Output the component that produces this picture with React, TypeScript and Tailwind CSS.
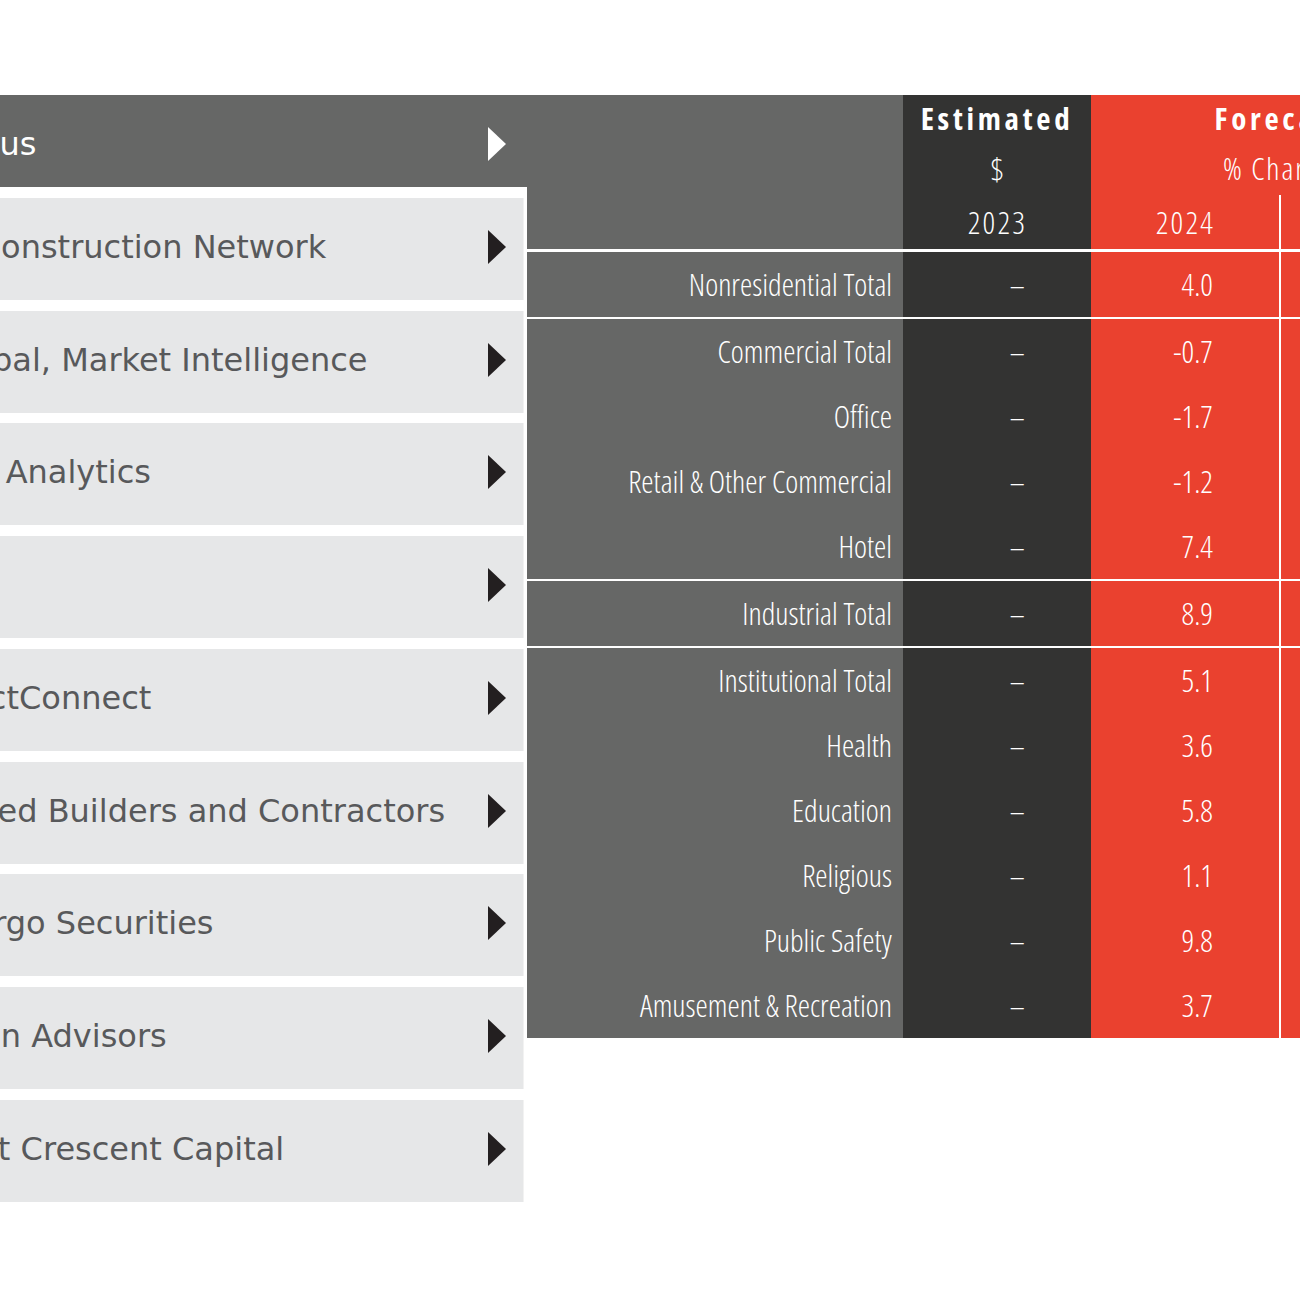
type Row = {
  label: string;
  estimated: string;
  forecast: string;
};

type Group = Row[];

const PANELISTS = [
  "Dodge Construction Network",
  "S&P Global, Market Intelligence",
  "Moody's Analytics",
  "FMI",
  "ConstructConnect",
  "Associated Builders and Contractors",
  "Wells Fargo Securities",
  "Markstein Advisors",
  "Pinecrest Crescent Capital",
];

const GROUPS: Group[] = [
  [{ label: "Nonresidential Total", estimated: "–", forecast: "4.0" }],
  [
    { label: "Commercial Total", estimated: "–", forecast: "-0.7" },
    { label: "Office", estimated: "–", forecast: "-1.7" },
    { label: "Retail & Other Commercial", estimated: "–", forecast: "-1.2" },
    { label: "Hotel", estimated: "–", forecast: "7.4" },
  ],
  [{ label: "Industrial Total", estimated: "–", forecast: "8.9" }],
  [
    { label: "Institutional Total", estimated: "–", forecast: "5.1" },
    { label: "Health", estimated: "–", forecast: "3.6" },
    { label: "Education", estimated: "–", forecast: "5.8" },
    { label: "Religious", estimated: "–", forecast: "1.1" },
    { label: "Public Safety", estimated: "–", forecast: "9.8" },
    { label: "Amusement & Recreation", estimated: "–", forecast: "3.7" },
  ],
];

function Arrow({ light }: { light?: boolean }) {
  return (
    <svg width="18" height="34" viewBox="0 0 18 34" className="shrink-0">
      <polygon points="0,0 18,17 0,34" fill={light ? "#ffffff" : "#231f20"} />
    </svg>
  );
}

function PanelList() {
  return (
    <aside className="ml-[-160px] flex w-[687px] shrink-0 flex-col gap-[10.75px] font-['DejaVu_Sans',sans-serif] text-[32px]">
      <div className="flex h-[92px] w-[687px] items-center justify-between bg-[#666766] pl-[24px] pr-[21px] pt-[6px] text-white">
        <span>Consensus</span>
        <Arrow light />
      </div>

      {PANELISTS.map((name) => (
        <div
          key={name}
          className="flex h-[102px] w-[684px] items-center justify-between whitespace-nowrap border-r border-[#f2f2f2] bg-[#e6e7e8] pb-[4px] pl-[24px] pr-[17px] text-[#58595b]"
        >
          <span>{name}</span>
          <Arrow />
        </div>
      ))}
    </aside>
  );
}

function TableRow({ row }: { row: Row }) {
  return (
    <div className="flex h-[65px]">
      <div className="flex w-[376px] shrink-0 items-center justify-end bg-[#666766] pr-[11px]">
        {row.label}
      </div>
      <div className="flex w-[188px] shrink-0 items-center justify-end bg-[#333332] pr-[66px]">
        {row.estimated}
      </div>
      <div className="flex w-[188px] shrink-0 items-center justify-end bg-[#ea412f] pr-[66px]">
        {row.forecast}
      </div>
      <div className="w-[2px] shrink-0 bg-white" />
      <div className="w-[188px] shrink-0 bg-[#ea412f]" />
    </div>
  );
}

function ForecastTable() {
  return (
    <section className="w-[942px] shrink-0 font-['Open_Sans',sans-serif] text-[31px] font-light text-white font-stretch-condensed">
      <div className="flex h-[154px]">
        <div className="w-[376px] shrink-0 bg-[#666766]" />

        <div className="flex w-[188px] shrink-0 flex-col bg-[#333332]">
          <div className="flex h-[46px] items-center justify-center font-bold tracking-[0.12em]">
            Estimated
          </div>
          <div className="flex h-[54px] items-center justify-center">$</div>
          <div className="flex h-[54px] items-center justify-end pr-[64px] tracking-[0.07em]">
            2023
          </div>
        </div>

        <div className="flex w-[378px] shrink-0 flex-col bg-[#ea412f]">
          <div className="flex h-[46px] items-center justify-center font-bold tracking-[0.12em]">
            Forecast
          </div>
          <div className="flex h-[54px] items-center justify-center tracking-[0.06em]">
            % Change
          </div>
          <div className="flex h-[54px]">
            <div className="flex w-[188px] items-center justify-end pr-[64px] tracking-[0.07em]">
              2024
            </div>
            <div className="w-[2px] bg-white" />
            <div className="flex w-[188px] items-center justify-end pr-[64px] tracking-[0.07em]">
              2025
            </div>
          </div>
        </div>
      </div>

      <div className="h-[3px] bg-white" />

      {GROUPS.map((group, i) => (
        <div key={group[0].label}>
          {i > 0 && <div className="h-[2px] bg-white" />}
          {group.map((row) => (
            <TableRow key={row.label} row={row} />
          ))}
        </div>
      ))}
    </section>
  );
}

export default function App() {
  return (
    <main className="h-[1300px] w-[1300px] overflow-hidden bg-white pt-[95px]">
      <div className="flex items-start">
        <PanelList />
        <ForecastTable />
      </div>
    </main>
  );
}
